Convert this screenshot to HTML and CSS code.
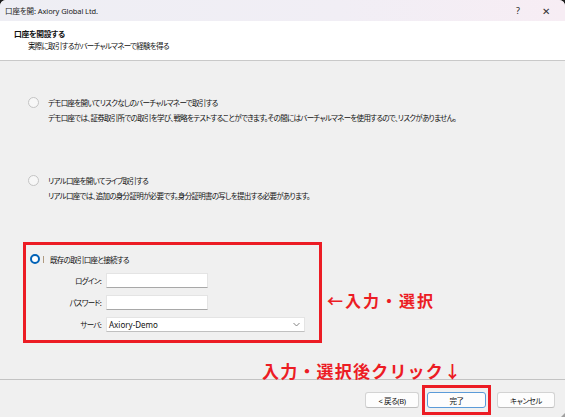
FILE: index.html
```html
<!DOCTYPE html>
<html lang="ja">
<head>
<meta charset="utf-8">
<title>口座を開</title>
<link rel="stylesheet" href="styles.css">
</head>
<body>
<div class="window">
  <div class="titlebar">
    <span class="title">口座を開: Axiory Global Ltd.</span>
    <span class="tb-btns"><span class="help">?</span><span class="close">✕</span></span>
  </div>
  <div class="header">
    <div class="h-title">口座を開設する</div>
    <div class="h-sub">実際に取引するかバーチャルマネーで経験を得る</div>
  </div>
  <div class="content">
    <div class="option opt1">
      <div class="opt-row"><span class="radio"></span><span class="opt-label">デモ口座を開いてリスクなしのバーチャルマネーで取引する</span></div>
      <div class="opt-desc">デモ口座では、証券取引所での取引を学び、戦略をテストすることができます。その間にはバーチャルマネーを使用するので、リスクがありません。</div>
    </div>
    <div class="option opt2">
      <div class="opt-row"><span class="radio"></span><span class="opt-label">リアル口座を開いてライブ取引する</span></div>
      <div class="opt-desc">リアル口座では、追加の身分証明が必要です。身分証明書の写しを提出する必要があります。</div>
    </div>
    <div class="annot-row">
      <div class="opt3">
        <div class="opt-row"><span class="radio checked"></span><span class="focus-mark"></span><span class="opt-label">既存の取引口座と接続する</span></div>
        <div class="field"><span class="f-label">ログイン:</span><span class="input"></span></div>
        <div class="field"><span class="f-label">パスワード:</span><span class="input"></span></div>
        <div class="field"><span class="f-label">サーバ:</span><span class="select"><span class="sel-text">Axiory-Demo</span><svg class="chev" width="7" height="5" viewBox="0 0 7 5"><path d="M0.5 1 L3.5 4 L6.5 1" fill="none" stroke="#777" stroke-width="0.9"/></svg></span></div>
      </div>
      <div class="annot">←入力・選択</div>
    </div>
  </div>
  <div class="footer">
    <div class="annot2">入力・選択後クリック↓</div>
    <button class="btn back">&lt; 戻る(B)</button>
    <span class="hl-btn"><button class="btn primary">完了</button></span>
    <button class="btn cancel">キャンセル</button>
  </div>
  <span class="grip"></span>
</div>
</body>
</html>
```
FILE: styles.css
```css
html, body {
  margin: 0;
  padding: 0;
  background: #1e1e1e;
}
.window {
  width: 565px;
  height: 417px;
  display: flex;
  flex-direction: column;
  background: #f0f0f0;
  border-radius: 6px 6px 0 0;
  overflow: hidden;
  position: relative;
  font-family: "Noto Sans", "Noto Sans CJK JP", sans-serif;
  font-size: 7.5px;
  letter-spacing: -0.7px;
  color: #111;
  font-feature-settings: "palt";
}
.titlebar {
  height: 21px;
  flex: none;
  display: flex;
  align-items: center;
  justify-content: space-between;
  background: linear-gradient(90deg, #eeeef4 0%, #f1eef5 60%, #f7edf4 100%);
  padding: 0 0 0 5px;
}
.title {
  font-size: 7.5px;
  letter-spacing: -0.1px;
  color: #1a1a1a;
}
.tb-btns {
  display: flex;
  align-items: center;
  letter-spacing: 0;
}
.help {
  width: 28px;
  text-align: center;
  font-size: 9px;
  color: #222;
}
.close {
  width: 28px;
  margin-right: 5px;
  text-align: center;
  font-size: 10px;
  color: #333;
}
.header {
  height: 40px;
  flex: none;
  background: #fff;
  border-bottom: 1px solid #c9c9c9;
  padding: 7px 0 0 14px;
  box-sizing: border-box;
}
.h-title {
  font-weight: bold;
  font-size: 7.8px;
  letter-spacing: -0.3px;
  line-height: 12px;
  height: 12px;
}
.h-sub {
  line-height: 12px;
  height: 12px;
  padding-left: 14px;
}
.content {
  flex: 1;
  padding: 35px 0 0 23px;
  box-sizing: border-box;
}
.option {
  padding-left: 5px;
}
.opt2 {
  margin-top: 50px;
}
.opt-row {
  display: flex;
  align-items: center;
  height: 12px;
}
.radio {
  width: 9px;
  height: 9px;
  border: 1px solid #c4c4c4;
  border-radius: 50%;
  background: #f7f7f7;
  flex: none;
  margin-right: 9px;
}
.radio.checked {
  width: 6px;
  height: 6px;
  border: 2.5px solid #0062b7;
  background: #fff;
  margin-right: 3px;
}
.focus-mark {
  width: 1px;
  height: 7px;
  background: #b09a80;
  margin-right: 6px;
}
.opt-label {
  white-space: nowrap;
}
.opt-desc {
  margin-top: 4px;
  height: 12px;
  line-height: 12px;
  padding-left: 20px;
  white-space: nowrap;
}
.annot-row {
  display: flex;
  align-items: center;
  margin-top: 40px;
}
.opt3 {
  width: 299px;
  height: 101px;
  box-sizing: border-box;
  border: 3px solid #ec1c24;
  padding: 8px 0 0 4px;
}
.field {
  display: flex;
  align-items: center;
  height: 15px;
  margin-top: 7px;
}
.opt3 .opt-row + .field {
  margin-top: 8px;
}
.f-label {
  width: 71px;
  text-align: right;
  margin-right: 5px;
  flex: none;
}
.input {
  width: 102px;
  height: 15px;
  box-sizing: border-box;
  background: #fff;
  border: 1px solid #e4e4e4;
  border-bottom-color: #a8a8a8;
}
.select {
  width: 199px;
  height: 15px;
  box-sizing: border-box;
  background: #fff;
  border: 1px solid #e4e4e4;
  border-bottom-color: #c0c0c0;
  display: flex;
  align-items: center;
  justify-content: space-between;
  padding: 0 4px 0 2px;
}
.sel-text {
  font-size: 8px;
  letter-spacing: 0;
  color: #111;
}
.annot {
  margin-left: 5px;
  margin-top: 14px;
  font-family: "Noto Sans CJK JP", sans-serif;
  font-size: 16px;
  letter-spacing: 2px;
  font-weight: bold;
  color: #ec1c24;
  white-space: nowrap;
  font-feature-settings: normal;
}
.footer {
  height: 38px;
  flex: none;
  border-top: 1px solid #c3c3c3;
  box-sizing: border-box;
  display: flex;
  align-items: center;
  justify-content: flex-end;
  padding: 5px 10px 2px 0;
}
.annot2 {
  position: absolute;
  left: 262px;
  top: 358px;
  font-family: "Noto Sans CJK JP", sans-serif;
  font-size: 17px;
  letter-spacing: 1.2px;
  font-weight: bold;
  color: #ec1c24;
  white-space: nowrap;
  font-feature-settings: normal;
}
.btn {
  height: 16px;
  box-sizing: border-box;
  background: #fdfdfd;
  border: 1px solid #d3d3d3;
  border-bottom-color: #bdbdbd;
  border-radius: 3px;
  font-family: inherit;
  font-size: 7.5px;
  letter-spacing: -0.4px;
  color: #111;
  padding: 0;
  margin: 0;
  font-feature-settings: "palt";
}
.back {
  width: 54px;
  margin-right: 3px;
}
.hl-btn {
  display: flex;
  border: 3px solid #ec1c24;
  padding: 4px 2px;
}
.primary {
  width: 59px;
  border: 1px solid #5b9bd8;
}
.cancel {
  width: 58px;
  margin-left: 6px;
}
.grip {
  position: absolute;
  right: 0;
  bottom: 0;
  width: 0;
  height: 0;
  border-left: 4px solid transparent;
  border-bottom: 4px solid #a0a0a0;
}
```
